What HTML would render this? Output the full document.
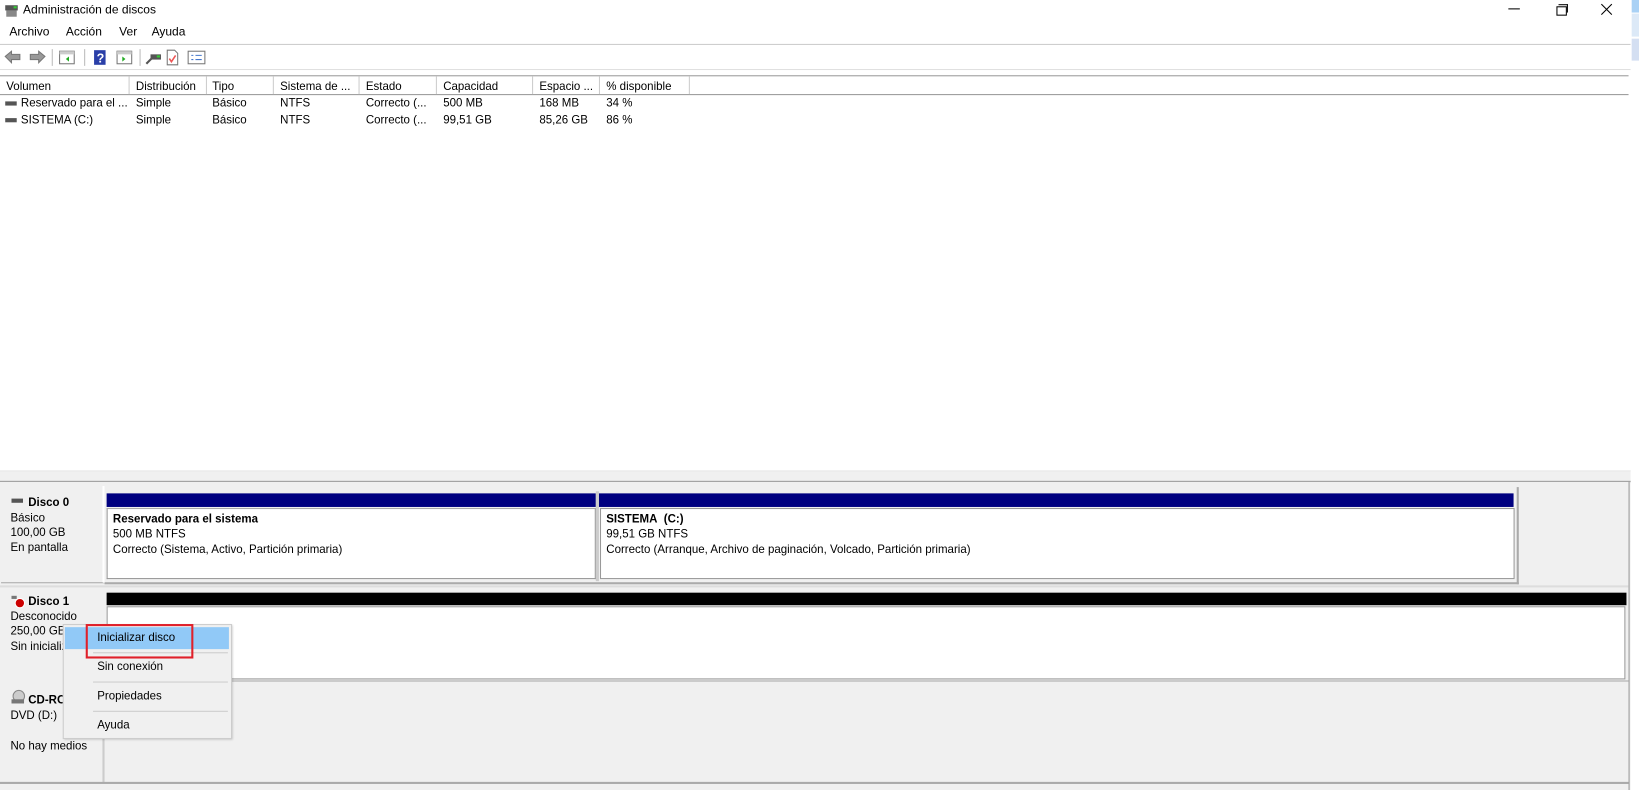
<!DOCTYPE html>
<html><head><meta charset="utf-8">
<style>
html,body{margin:0;padding:0;width:1639px;height:790px;overflow:hidden;background:#fff}
#w{position:absolute;left:0;top:0;width:1568px;height:756px;transform:scale(1.04528);transform-origin:0 0;font-family:"Liberation Sans",sans-serif;font-size:11px;color:#000;background:#fff}
.a{position:absolute;white-space:nowrap}
div.a:not(:empty){margin-top:2px}
.b{font-weight:bold}
.g{background:#f0f0f0}
</style></head><body><div id="w">
<svg class="a" style="left:4px;top:3px" width="14" height="14"><rect x="1" y="2" width="12" height="5" fill="#555"/><rect x="2" y="7" width="10" height="6" fill="#888"/><rect x="9" y="3" width="3" height="2" fill="#3c3"/></svg>
<div class="a" style="left:22px;top:2px;font-size:11.5px">Administración de discos</div>
<div class="a" style="left:1443px;top:8px;width:11px;border-top:1px solid #000"></div>
<div class="a" style="left:1489px;top:6px;width:8px;height:7px;border:1px solid #000"></div>
<div class="a" style="left:1491px;top:4px;width:8px;height:7px;border-top:1px solid #000;border-right:1px solid #000"></div>
<svg class="a" style="left:1531px;top:3px" width="12" height="12"><path d="M1 1L11 11M11 1L1 11" stroke="#000" stroke-width="1"/></svg>
<div class="a" style="left:9px;top:23px;font-size:11.5px">Archivo</div>
<div class="a" style="left:63px;top:23px;font-size:11.5px">Acción</div>
<div class="a" style="left:114px;top:23px;font-size:11.5px">Ver</div>
<div class="a" style="left:145px;top:23px;font-size:11.5px">Ayuda</div>
<div class="a" style="left:0;top:42px;width:1560px;border-top:1px solid #ccc"></div>
<svg class="a" style="left:3px;top:46px" width="200" height="18">
<path d="M2 8L8 3V6H16V11H8V14Z" fill="#999" stroke="#777"/>
<path d="M40 8L34 3V6H26V11H34V14Z" fill="#999" stroke="#777"/>
<line x1="47" y1="1" x2="47" y2="17" stroke="#bbb"/>
<rect x="54" y="3" width="14" height="12" fill="#fff" stroke="#777"/><rect x="54" y="3" width="14" height="3" fill="#ccc"/><path d="M63 8V13L60 10.5Z" fill="#2a2"/>
<line x1="78" y1="1" x2="78" y2="17" stroke="#bbb"/>
<rect x="87" y="2" width="11" height="14" fill="#2a3fa8"/><text x="89.5" y="14" fill="#fff" font-size="12" font-weight="bold" font-family="Liberation Sans">?</text>
<rect x="109" y="3" width="14" height="12" fill="#fff" stroke="#777"/><rect x="109" y="3" width="14" height="3" fill="#ccc"/><path d="M114 8V13L117 10.5Z" fill="#2a2"/>
<line x1="131" y1="1" x2="131" y2="17" stroke="#bbb"/>
<path d="M137 15L142 10" stroke="#555" stroke-width="2"/><rect x="141" y="6" width="10" height="5" fill="#555"/><rect x="147" y="7" width="3" height="2" fill="#3c3"/>
<path d="M157 2H164L167 5V16H157Z" fill="#fff" stroke="#777"/><path d="M159 10L161 13L165 7" stroke="#e55" stroke-width="1.5" fill="none"/>
<rect x="177" y="3" width="16" height="12" fill="#fff" stroke="#777"/><path d="M180 7h2M184 7h6M180 11h2M184 11h6" stroke="#47c"/>
</svg>
<div class="a" style="left:0;top:66px;width:1560px;border-top:1px solid #e0e0e0"></div>
<div class="a" style="left:0;top:72px;width:1558px;height:17px;border-top:1px solid #999;border-bottom:1px solid #999;background:#fff"></div>
<div class="a" style="left:6px;top:75px">Volumen</div>
<div class="a" style="left:130px;top:75px">Distribución</div>
<div class="a" style="left:203px;top:75px">Tipo</div>
<div class="a" style="left:268px;top:75px">Sistema de ...</div>
<div class="a" style="left:350px;top:75px">Estado</div>
<div class="a" style="left:424px;top:75px">Capacidad</div>
<div class="a" style="left:516px;top:75px">Espacio ...</div>
<div class="a" style="left:580px;top:75px">% disponible</div>
<div class="a" style="left:123px;top:73px;height:17px;border-left:1px solid #ccc"></div>
<div class="a" style="left:197px;top:73px;height:17px;border-left:1px solid #ccc"></div>
<div class="a" style="left:261px;top:73px;height:17px;border-left:1px solid #ccc"></div>
<div class="a" style="left:343px;top:73px;height:17px;border-left:1px solid #ccc"></div>
<div class="a" style="left:417px;top:73px;height:17px;border-left:1px solid #ccc"></div>
<div class="a" style="left:509px;top:73px;height:17px;border-left:1px solid #ccc"></div>
<div class="a" style="left:573px;top:73px;height:17px;border-left:1px solid #ccc"></div>
<div class="a" style="left:659px;top:73px;height:17px;border-left:1px solid #ccc"></div>
<div class="a" style="left:5px;top:97px;width:11px;height:4px;background:#555"></div>
<div class="a" style="left:5px;top:113px;width:11px;height:4px;background:#555"></div>
<div class="a" style="left:20px;top:91px">Reservado para el ...</div>
<div class="a" style="left:130px;top:91px">Simple</div><div class="a" style="left:203px;top:91px">Básico</div><div class="a" style="left:268px;top:91px">NTFS</div><div class="a" style="left:350px;top:91px">Correcto (...</div><div class="a" style="left:424px;top:91px">500 MB</div><div class="a" style="left:516px;top:91px">168 MB</div><div class="a" style="left:580px;top:91px">34 %</div>
<div class="a" style="left:20px;top:107px">SISTEMA (C:)</div>
<div class="a" style="left:130px;top:107px">Simple</div><div class="a" style="left:203px;top:107px">Básico</div><div class="a" style="left:268px;top:107px">NTFS</div><div class="a" style="left:350px;top:107px">Correcto (...</div><div class="a" style="left:424px;top:107px">99,51 GB</div><div class="a" style="left:516px;top:107px">85,26 GB</div><div class="a" style="left:580px;top:107px">86 %</div>
<div class="a" style="left:1560px;top:0;width:8px;height:756px;background:#fff"></div>
<div class="a" style="left:1561px;top:0;width:7px;height:12px;background:#a9d1f5"></div>
<div class="a" style="left:1561px;top:13px;width:7px;height:22px;background:#dce9f7"></div>
<div class="a" style="left:1561px;top:37px;width:7px;height:21px;background:#d4dff2"></div>
<div class="a g" style="left:0;top:450px;width:1560px;height:9px;border-top:1px solid #e8e8e8;border-bottom:2px solid #999"></div>
<div class="a g" style="left:0;top:461px;width:1560px;height:295px"></div>
<div class="a" style="left:1558px;top:461px;height:295px;border-left:1px solid #999"></div>
<div class="a" style="left:1px;top:465px;width:97px;height:92px;border-right:2px solid #fff;border-bottom:1px solid #aaa"></div>
<div class="a" style="left:11px;top:477px;width:11px;height:4px;background:#555"></div>
<div class="a b" style="left:27px;top:473px">Disco 0</div>
<div class="a" style="left:10px;top:488px">Básico</div>
<div class="a" style="left:10px;top:502px">100,00 GB</div>
<div class="a" style="left:10px;top:516px">En pantalla</div>
<div class="a" style="left:100px;top:466px;width:1351px;height:91px;border-right:2px solid #aaa;border-bottom:2px solid #aaa;background:#f0f0f0"></div>
<div class="a" style="left:102px;top:472px;width:468px;height:13px;background:#000080"></div>
<div class="a" style="left:573px;top:472px;width:875px;height:13px;background:#000080"></div>
<div class="a" style="left:570px;top:470px;width:3px;height:86px;background:#ccc"></div>
<div class="a" style="left:102px;top:486px;width:466px;height:66px;background:#fff;border:1px solid #999;border-top-color:#aaa"></div>
<div class="a" style="left:574px;top:486px;width:873px;height:66px;background:#fff;border:1px solid #999"></div>
<div class="a b" style="left:108px;top:489px">Reservado para el sistema</div>
<div class="a" style="left:108px;top:503px">500 MB NTFS</div>
<div class="a" style="left:108px;top:518px">Correcto (Sistema, Activo, Partición primaria)</div>
<div class="a b" style="left:580px;top:489px">SISTEMA&nbsp; (C:)</div>
<div class="a" style="left:580px;top:503px">99,51 GB NTFS</div>
<div class="a" style="left:580px;top:518px">Correcto (Arranque, Archivo de paginación, Volcado, Partición primaria)</div>
<div class="a" style="left:0;top:560px;width:1558px;border-top:2px solid #ddd"></div>
<div class="a" style="left:14px;top:572px;width:8px;height:8px;border-radius:50%;background:#c00;border:1px solid #fff"></div>
<div class="a" style="left:11px;top:570px;width:5px;height:3px;background:#777"></div>
<div class="a b" style="left:27px;top:568px">Disco 1</div>
<div class="a" style="left:10px;top:582px">Desconocido</div>
<div class="a" style="left:10px;top:596px">250,00 GB</div>
<div class="a" style="left:10px;top:611px">Sin inicializado</div>
<div class="a" style="left:102px;top:567px;width:1454px;height:12px;background:#000"></div>
<div class="a" style="left:102px;top:580px;width:1451px;height:68px;background:#fff;border:1px solid #999"></div>
<div class="a" style="left:100px;top:651px;width:1458px;border-top:1px solid #aaa"></div>
<div class="a" style="left:12px;top:660px;width:10px;height:10px;border-radius:50%;background:#ccc;border:1px solid #888"></div>
<div class="a" style="left:11px;top:669px;width:12px;height:4px;background:#777"></div>
<div class="a b" style="left:27px;top:662px">CD-ROM 0</div>
<div class="a" style="left:10px;top:677px">DVD (D:)</div>
<div class="a" style="left:10px;top:706px">No hay medios</div>
<div class="a" style="left:98px;top:656px;height:93px;border-left:2px solid #ccc"></div>
<div class="a" style="left:0;top:748px;width:1558px;border-top:2px solid #aaa"></div>
<div class="a" style="left:60px;top:597px;width:160px;height:108px;background:#f0f0f0;border:1px solid #ccc;box-shadow:1px 1px 2px rgba(0,0,0,.2)"></div>
<div class="a" style="left:62px;top:600px;width:157px;height:21px;background:#91c9f7"></div>
<div class="a" style="left:89px;top:624px;width:129px;border-top:1px solid #ccc"></div>
<div class="a" style="left:89px;top:652px;width:129px;border-top:1px solid #ccc"></div>
<div class="a" style="left:89px;top:680px;width:129px;border-top:1px solid #ccc"></div>
<div class="a" style="left:93px;top:602px">Inicializar disco</div>
<div class="a" style="left:93px;top:630px">Sin conexión</div>
<div class="a" style="left:93px;top:658px">Propiedades</div>
<div class="a" style="left:93px;top:686px">Ayuda</div>
<div class="a" style="left:82px;top:597px;width:99px;height:29px;border:2px solid #e0202a"></div>
</div></body></html>
